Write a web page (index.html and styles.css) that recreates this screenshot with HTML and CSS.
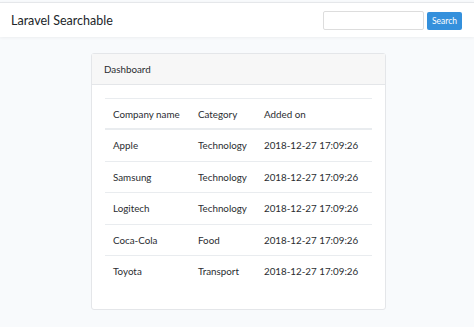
FILE: index.html
```html
<!DOCTYPE html>
<html lang="en">
<head>
    <meta charset="UTF-8">
    <title>Laravel Searchable</title>
    <link rel="stylesheet" href="styles.css">
</head>
<body>
    <nav class="navbar">
        <a class="brand" href="#">Laravel Searchable</a>
        <form class="search">
            <input type="text" class="search-input">
            <button type="button" class="search-btn">Search</button>
        </form>
    </nav>
    <main>
        <div class="card">
            <div class="card-header">Dashboard</div>
            <div class="card-body">
                <table>
                    <thead>
                        <tr><th>Company name</th><th>Category</th><th>Added on</th></tr>
                    </thead>
                    <tbody>
                        <tr><td>Apple</td><td>Technology</td><td>2018-12-27 17:09:26</td></tr>
                        <tr><td>Samsung</td><td>Technology</td><td>2018-12-27 17:09:26</td></tr>
                        <tr><td>Logitech</td><td>Technology</td><td>2018-12-27 17:09:26</td></tr>
                        <tr><td>Coca-Cola</td><td>Food</td><td>2018-12-27 17:09:26</td></tr>
                        <tr><td>Toyota</td><td>Transport</td><td>2018-12-27 17:09:26</td></tr>
                    </tbody>
                </table>
            </div>
        </div>
    </main>
</body>
</html>
```
FILE: styles.css
```css
body { margin: 0; background: #f8fafc; font-family: Lato, "Open Sans", sans-serif; color: #2a2d31; font-size: 9.8px; }
.navbar { margin-top: 2px; border-top: 1px solid #e5e7ea; background: #fff; height: 34px; display: flex; justify-content: space-between; align-items: center; padding: 0 12px 0 11px; box-shadow: 0 1px 3px rgba(0,0,0,0.05); }
.brand { color: #212529; text-decoration: none; font-size: 12.5px; }
.search { display: flex; align-items: center; gap: 3px; }
.search-input { width: 101px; height: 19px; box-sizing: border-box; border: 1px solid #ddd; border-radius: 2px; padding: 0 4px; }
.search-btn { height: 18px; margin-top: 2px; background: #3490dc; color: #fff; border: none; border-radius: 2px; font-family: inherit; font-size: 8.5px; padding: 0 5px; }
main { padding: 16px 0; display: flex; justify-content: center; }
.card { width: 293px; margin-left: 3px; background: #fff; border: 1px solid #e4e6e9; border-radius: 3px; }
.card-header { background: #f7f7f7; border-bottom: 1px solid #e4e6e9; height: 30px; line-height: 30px; padding: 0 12px; }
.card-body { padding: 13px 13px 22px; }
table { width: 100%; border-collapse: collapse; }
th, td { text-align: left; font-weight: normal; border-top: 1px solid #e9ecef; height: 30.5px; padding: 0 0 0 8px; }
th { border-bottom: 2px solid #e9ecef; height: 29px; }
th:nth-child(1), td:nth-child(1) { width: 77px; }
th:nth-child(2), td:nth-child(2) { width: 58px; }
```
